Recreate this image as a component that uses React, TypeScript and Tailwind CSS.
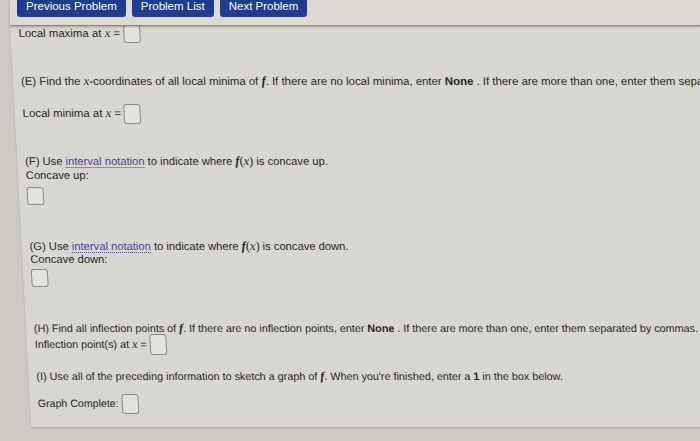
import type { ReactNode } from 'react';

const serif = { fontFamily: '"Liberation Serif", "DejaVu Serif", serif' };

function X() {
  return (
    <span className="text-[1.12em] italic" style={serif}>
      x
    </span>
  );
}

function F() {
  return (
    <span className="text-[1.1em] font-bold italic" style={serif}>
      f
    </span>
  );
}

function Paren({ children }: { children: ReactNode }) {
  return (
    <span className="text-[1.1em]" style={serif}>
      {children}
    </span>
  );
}

function Box({ className = '' }: { className?: string }) {
  return <span className={`inline-block w-[17px] rounded-[3px] border border-[#8d8b86] bg-[#e4e2dd] ${className}`} />;
}

function Link({ children }: { children: ReactNode }) {
  return (
    <span className="text-[#4a3f9e] underline decoration-dotted decoration-[#4a3f9e] underline-offset-2">{children}</span>
  );
}

function NavButton({ children }: { children: ReactNode }) {
  return (
    <button
      type="button"
      className="flex h-[17px] items-start rounded-b-[3px] bg-[#1f3c8e] px-[9px] text-[11.5px] leading-[13px] text-white"
    >
      {children}
    </button>
  );
}

export default function App() {
  return (
    <div
      className="relative h-[441px] w-[700px] overflow-hidden bg-[#cbc9c2] text-[#262626]"
      style={{ fontFamily: '"Liberation Sans", Arial, sans-serif' }}
    >
      <div className="relative z-10 ml-[10px] flex h-[26px] gap-[6px] border-b border-[#8a8780] bg-[#dcdad3] pl-[7px] shadow-[0_1px_2px_rgba(0,0,0,0.25)]">
        <NavButton>Previous Problem</NavButton>
        <NavButton>Problem List</NavButton>
        <NavButton>Next Problem</NavButton>
      </div>

      <div className="ml-[10px] h-[402px] origin-top-left skew-x-3 bg-[#d8d6d0] pl-[8px] shadow-[0_1px_2px_rgba(0,0,0,0.2)]">
        <div className="text-[11.4px]">
          <div className="-mt-[1px] flex h-[18px] items-center gap-[3px]">
            <span>
              Local maxima at <X /> =
            </span>
            <Box className="h-[18px]" />
          </div>

          <p className="mt-[31px] whitespace-nowrap leading-[15px]">
            (E) Find the <X />-coordinates of all local minima of <F />. If there are no local minima, enter{' '}
            <b>None</b> . If there are more than one, enter them separated by commas.
          </p>
          <div className="mt-[15px] flex h-[20px] items-center gap-[3px]">
            <span>
              Local minima at <X /> =
            </span>
            <Box className="h-[20px]" />
          </div>
        </div>

        <div className="text-[11.2px]">
          <div className="mt-[30px] leading-[14px]">
            <p>
              (F) Use <Link>interval notation</Link> to indicate where <F />
              <Paren>(</Paren>
              <X />
              <Paren>)</Paren> is concave up.
            </p>
            <p>Concave up:</p>
          </div>
          <Box className="mt-[5px] h-[18px]" />

          <div className="mt-[30px] leading-[13px]">
            <p>
              (G) Use <Link>interval notation</Link> to indicate where <F />
              <Paren>(</Paren>
              <X />
              <Paren>)</Paren> is concave down.
            </p>
            <p>Concave down:</p>
          </div>
          <Box className="mt-[3px] h-[18px]" />
        </div>

        <div className="text-[10.8px]">
          <p className="mt-[29px] whitespace-nowrap leading-[14px]">
            (H) Find all inflection points of <F />. If there are no inflection points, enter <b>None</b> . If there
            are more than one, enter them separated by commas.
          </p>
          <div className="-mt-[1px] flex h-[21px] items-center gap-[3px]">
            <span>
              Inflection point(s) at <X /> =
            </span>
            <Box className="h-[21px]" />
          </div>

          <p className="mt-[14px] leading-[14px]">
            (I) Use all of the preceding information to sketch a graph of <F />. When you're finished, enter a{' '}
            <b>1</b> in the box below.
          </p>
          <div className="mt-[11px] flex h-[20px] items-center gap-[3px] text-[10.6px]">
            <span>Graph Complete:</span>
            <Box className="h-[20px]" />
          </div>
        </div>
      </div>
    </div>
  );
}
